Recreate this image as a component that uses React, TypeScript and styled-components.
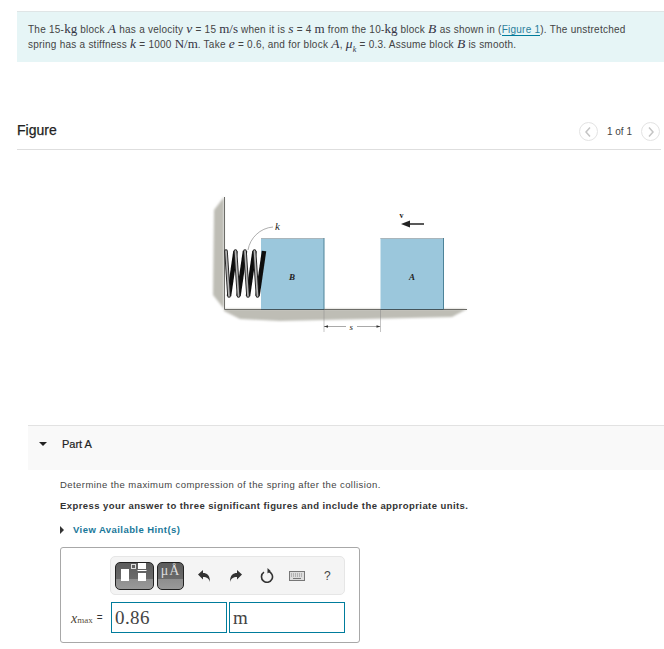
import React from 'react';
import styled, { createGlobalStyle } from 'styled-components';

const GlobalStyle = createGlobalStyle`
  html, body { margin: 0; padding: 0; background: #fff; }
  body { font-family: "Liberation Sans", Arial, sans-serif; color: #333; }
`;

const Page = styled.div`
  width: 664px;
  height: 649px;
  overflow: hidden;
  padding: 11px 0 0 17px;
  box-sizing: border-box;
`;

const Intro = styled.div`
  height: 51px;
  box-sizing: border-box;
  background: #e6f5f6;
  border-top: 1px solid #dfe5e6;
  padding: 10px 0 0 11px;
  font-size: 10px;
  line-height: 15px;
  letter-spacing: 0.24px;
  color: #444;
  white-space: nowrap;
`;

const M = styled.span`
  font-family: "Liberation Serif", serif;
  font-size: 13.5px;
  line-height: 0;
  color: #334;
`;

const MI = styled(M)`
  font-style: italic;
`;

const MB = styled(M)`
  font-size: 13px;
  letter-spacing: 0;
`;

const Sub = styled.sub`
  font-size: 8px;
  line-height: 0;
`;

const FigureLink = styled.span`
  color: #2b7f9c;
  border-bottom: 1px solid #007c9c;
`;

const FigureHeader = styled.div`
  margin-top: 56px;
  width: 644px;
  height: 31px;
  border-bottom: 1px solid #dedede;
  display: flex;
  align-items: flex-start;
  justify-content: space-between;
`;

const FigureTitle = styled.h2`
  margin: 0;
  font-size: 14px;
  line-height: 24px;
  font-weight: 400;
  color: #222;
  -webkit-text-stroke: 0.25px #222;
`;

const Pager = styled.div`
  display: flex;
  align-items: center;
  gap: 9px;
  margin-top: 4px;
  margin-right: 1px;
  font-size: 10px;
  color: #444;
`;

const PagerButton = styled.span`
  width: 19px;
  height: 19px;
  border-radius: 50%;
  border: 1px solid #e3e3e3;
  box-sizing: border-box;
  display: flex;
  align-items: center;
  justify-content: center;
`;

const FigureBody = styled.div`
  display: flex;
  justify-content: center;
  padding-top: 30px;
  height: 275px;
  box-sizing: border-box;
`;

const FigureSvg = styled.svg`
  width: 280px;
  height: 170px;
  margin-left: -2px;
  display: block;
`;

const Part = styled.section`
  margin-left: 11px;
`;

const PartHeader = styled.div`
  height: 45px;
  box-sizing: border-box;
  background: #f9f9f9;
  border-top: 1px solid #e2e2e2;
  display: flex;
  align-items: flex-start;
  padding: 9px 0 0 11px;
  gap: 15px;
  font-size: 11px;
  line-height: 18px;
  color: #222;
  -webkit-text-stroke: 0.2px #222;
`;

const Caret = styled.span`
  width: 0;
  height: 0;
  margin-top: 7px;
  border-left: 4px solid transparent;
  border-right: 4px solid transparent;
  border-top: 4px solid #222;
`;

const PartBody = styled.div`
  padding: 8px 0 0 32px;
  font-size: 9.5px;
  letter-spacing: 0.43px;
  color: #444;
`;

const Prompt = styled.p`
  margin: 0;
  line-height: 13px;
`;

const Instruction = styled.p`
  margin: 8px 0 0;
  line-height: 13px;
  font-weight: 700;
  color: #333;
`;

const HintRow = styled.div`
  margin-top: 11px;
  display: flex;
  align-items: center;
  gap: 9px;
  line-height: 13px;
  font-weight: 700;
  color: #19789a;
`;

const HintCaret = styled.span`
  width: 0;
  height: 0;
  border-top: 4px solid transparent;
  border-bottom: 4px solid transparent;
  border-left: 4px solid #333;
`;

const AnswerCard = styled.div`
  margin-top: 11px;
  width: 300px;
  height: 96px;
  box-sizing: border-box;
  border: 1px solid #a8a8a8;
  border-radius: 3px;
  padding: 8px 0 0 49px;
`;

const Toolbar = styled.div`
  width: 235px;
  height: 39px;
  box-sizing: border-box;
  background: #f4f4f4;
  border: 1px solid #e6e6e6;
  border-radius: 5px;
  display: flex;
  align-items: center;
  padding-left: 4px;
`;

const ToolButton = styled.span<{ $w: number }>`
  width: ${({ $w }) => $w}px;
  height: 28px;
  margin-right: 3px;
  box-sizing: border-box;
  border: 1px solid #222;
  border-radius: 5px;
  background: linear-gradient(#5c5c5c, #6a6a6a 62%, #8e8e8e 62%, #999);
  color: #ddd;
  font-family: "Liberation Serif", serif;
  font-size: 14px;
  line-height: 16px;
  letter-spacing: 1px;
  display: flex;
  justify-content: center;
`;

const ToolIcon = styled.svg<{ $ml: number }>`
  margin-left: ${({ $ml }) => $ml}px;
  flex: none;
  display: block;
`;

const Help = styled.span`
  margin-left: 19px;
  font-size: 12px;
  letter-spacing: 0;
  color: #444;
`;

const AnswerRow = styled.div`
  display: flex;
  align-items: center;
  margin-top: 7px;
  margin-left: 1px;
  gap: 2px;
  position: relative;
`;

const VarLabel = styled.span`
  position: absolute;
  left: -40px;
  top: 9px;
  font-family: "Liberation Serif", serif;
  font-size: 9px;
  letter-spacing: 0;
  color: #5a5040;
  white-space: nowrap;
`;

const VarName = styled.i`
  font-size: 14px;
  color: #4a4236;
`;

const Eq = styled.span`
  font-family: "Liberation Sans", sans-serif;
  font-size: 10px;
  color: #333;
  margin-left: 4px;
  vertical-align: 2px;
`;

const AnswerBox = styled.div`
  width: 116px;
  height: 31px;
  box-sizing: border-box;
  border: 1px solid #007c9c;
  padding-left: 3px;
  font-family: "Liberation Serif", serif;
  font-size: 19px;
  line-height: 29px;
  letter-spacing: 0.4px;
  color: #444;
`;

const Chevron = ({ dir }: { dir: 'l' | 'r' }) => (
  <svg width="8" height="12" viewBox="0 0 8 12">
    <path d={dir === 'l' ? 'M6 1.5 2 6l4 4.5' : 'M2 1.5 6 6l-4 4.5'} fill="none" stroke="#c4c4c4" strokeWidth="1.5" />
  </svg>
);

const Tex = ({ x, y, size, bold, upright, children }: { x: string; y: string; size: number; bold?: boolean; upright?: boolean; children: string }) => (
  <text
    x={x}
    y={y}
    fontSize={size}
    fontFamily='"Liberation Serif", serif'
    fontStyle={upright ? 'normal' : 'italic'}
    fontWeight={bold ? 700 : 400}
    fill="#222"
  >
    {children}
  </text>
);

const coilTops = [26, 35.5, 45, 54.5];

// the block diagram: coordinates are zoomed reference pixels / 3
const Diagram = () => (
  <FigureSvg viewBox="0 0 280 170">
    <defs>
      <filter id="soft" x="-10%" y="-10%" width="120%" height="120%">
        <feGaussianBlur stdDeviation="0.35" />
      </filter>
      <filter id="shade" x="-10%" y="-10%" width="120%" height="120%">
        <feGaussianBlur stdDeviation="1" />
      </filter>
    </defs>
    <g filter="url(#shade)" fill="#bebdb5">
      <path d="M24 17 14 30 13 115 24 129H267L252 137 80 141 40 139 24 131Z" />
    </g>
    <g filter="url(#soft)">
      <path d="M24.5 17V129.500H267" fill="none" stroke="#6c6c68" strokeWidth="1" />
      <rect x="61" y="58" width="63" height="71" fill="#9bc7dc" />
      <path d="M61 58.500H124" stroke="#a9b5bb" strokeWidth="1" />
      <path d="M124 58V129" stroke="#4d8399" strokeWidth="1" />
      <rect x="180.500" y="58" width="63" height="71" fill="#9bc7dc" />
      <path d="M180.500 58.500H243.500" stroke="#a9b5bb" strokeWidth="1" />
      <path d="M243.500 58V129" stroke="#4d8399" strokeWidth="1" />
      <path d="M61 129.500H124M180.500 129.500H243.500" stroke="#44555c" strokeWidth="1" />
      {coilTops.map(t => (
        <path key={`back${t}`} d={`M${t + 3} 116 L${t + 9.500} 71`} stroke="#111" strokeWidth="4.500" fill="none" />
      ))}
      {coilTops.map(t => (
        <g key={t} fill="none" strokeLinecap="round">
          <path d={`M${t} 71 L${t + 3} 116`} stroke="#222" strokeWidth="3.600" />
          <path d={`M${t} 71 L${t + 3} 116`} stroke="#b5b5b5" strokeWidth="1.700" />
        </g>
      ))}
      <path d="M48 70C50 58 60 48 73 47" fill="none" stroke="#777" strokeWidth="0.6" />
      <path d="M124 130V152M180.500 130V152" stroke="#888" strokeWidth="0.5" />
      <path d="M124 146.500H146M157 146.500H180" stroke="#555" strokeWidth="0.5" />
      <path d="M124 146.500l4-1.200v2.400ZM180.500 146.500l-4-1.200v2.400Z" fill="#333" />
      <path d="M206 44H224" stroke="#222" strokeWidth="1.500" />
      <path d="M201 44l9-3.500v7Z" fill="#222" />
    </g>
    <Tex x="75" y="50" size={11}>k</Tex>
    <Tex x="89" y="100" size={9} bold>B</Tex>
    <Tex x="209" y="100" size={9} bold>A</Tex>
    <Tex x="149.500" y="150" size={9}>s</Tex>
    <Tex x="199.500" y="38" size={8} bold upright>v</Tex>
  </FigureSvg>
);

export default function App() {
  return (
    <Page>
      <GlobalStyle />
      <Intro>
        The 15-<MB>kg</MB> block <MI>A</MI> has a velocity <MI>v</MI> = 15 <MB>m/s</MB> when it is <MI>s</MI> = 4 <MB>m</MB> from the 10-<MB>kg</MB> block <MI>B</MI> as shown in (<FigureLink>Figure 1</FigureLink>). The unstretched
        <br />
        spring has a stiffness <MI>k</MI> = 1000 <MB>N/m</MB>. Take <MI>e</MI> = 0.6, and for block <MI>A</MI>, <MI>μ<Sub>k</Sub></MI> = 0.3. Assume block <MI>B</MI> is smooth.
      </Intro>
      <FigureHeader>
        <FigureTitle>Figure</FigureTitle>
        <Pager>
          <PagerButton><Chevron dir="l" /></PagerButton>
          <span>1 of 1</span>
          <PagerButton><Chevron dir="r" /></PagerButton>
        </Pager>
      </FigureHeader>
      <FigureBody>
        <Diagram />
      </FigureBody>
      <Part>
        <PartHeader>
          <Caret />
          <span>Part A</span>
        </PartHeader>
        <PartBody>
          <Prompt>Determine the maximum compression of the spring after the collision.</Prompt>
          <Instruction>Express your answer to three significant figures and include the appropriate units.</Instruction>
          <HintRow>
            <HintCaret />
            <span>View Available Hint(s)</span>
          </HintRow>
          <AnswerCard>
            <Toolbar>
              <ToolButton $w={39}>
                <svg width="37" height="20" viewBox="0 0 37 20">
                  <rect x="5" y="6" width="8" height="12" fill="#fff" />
                  <rect x="15.500" y="1.500" width="4" height="4" fill="none" stroke="#ddd" strokeWidth="1" />
                  <rect x="22" y="0" width="8" height="6" fill="#fff" />
                  <rect x="21.500" y="7" width="9" height="1" fill="#fff" />
                  <rect x="22" y="10" width="8" height="8" fill="#fff" />
                </svg>
              </ToolButton>
              <ToolButton $w={27}>μÅ</ToolButton>
              <ToolIcon $ml={10} width="14" height="14" viewBox="0 0 14 14">
                <path d="M1 5.500 6 1v3c4 0 7 2 7 9-1-3.500-3-5-7-5v2.500Z" fill="#333" />
              </ToolIcon>
              <ToolIcon $ml={18} width="14" height="14" viewBox="0 0 14 14">
                <path d="M13 5.500 8 1v3C4 4 1 6 1 13c1-3.500 3-5 7-5v2.500Z" fill="#333" />
              </ToolIcon>
              <ToolIcon $ml={17} width="14" height="15" viewBox="0 0 14 15">
                <path d="M4 4.200a5.500 5.500 0 1 0 4-.800" fill="none" stroke="#333" strokeWidth="1.600" />
                <path d="M7.500 0v5.500l3-2.700Z" fill="#333" />
              </ToolIcon>
              <ToolIcon $ml={15} width="16" height="10" viewBox="0 0 16 10">
                <rect x="0.500" y="0.500" width="15" height="9" fill="#ddd" stroke="#777" />
                <path d="M2 3h12M2 5h12" stroke="#888" strokeWidth="1" strokeDasharray="1 1" />
                <path d="M4 7.500h8" stroke="#777" />
              </ToolIcon>
              <Help>?</Help>
            </Toolbar>
            <AnswerRow>
              <VarLabel><VarName>x</VarName>max<Eq>=</Eq></VarLabel>
              <AnswerBox>0.86</AnswerBox>
              <AnswerBox>m</AnswerBox>
            </AnswerRow>
          </AnswerCard>
        </PartBody>
      </Part>
    </Page>
  );
}
